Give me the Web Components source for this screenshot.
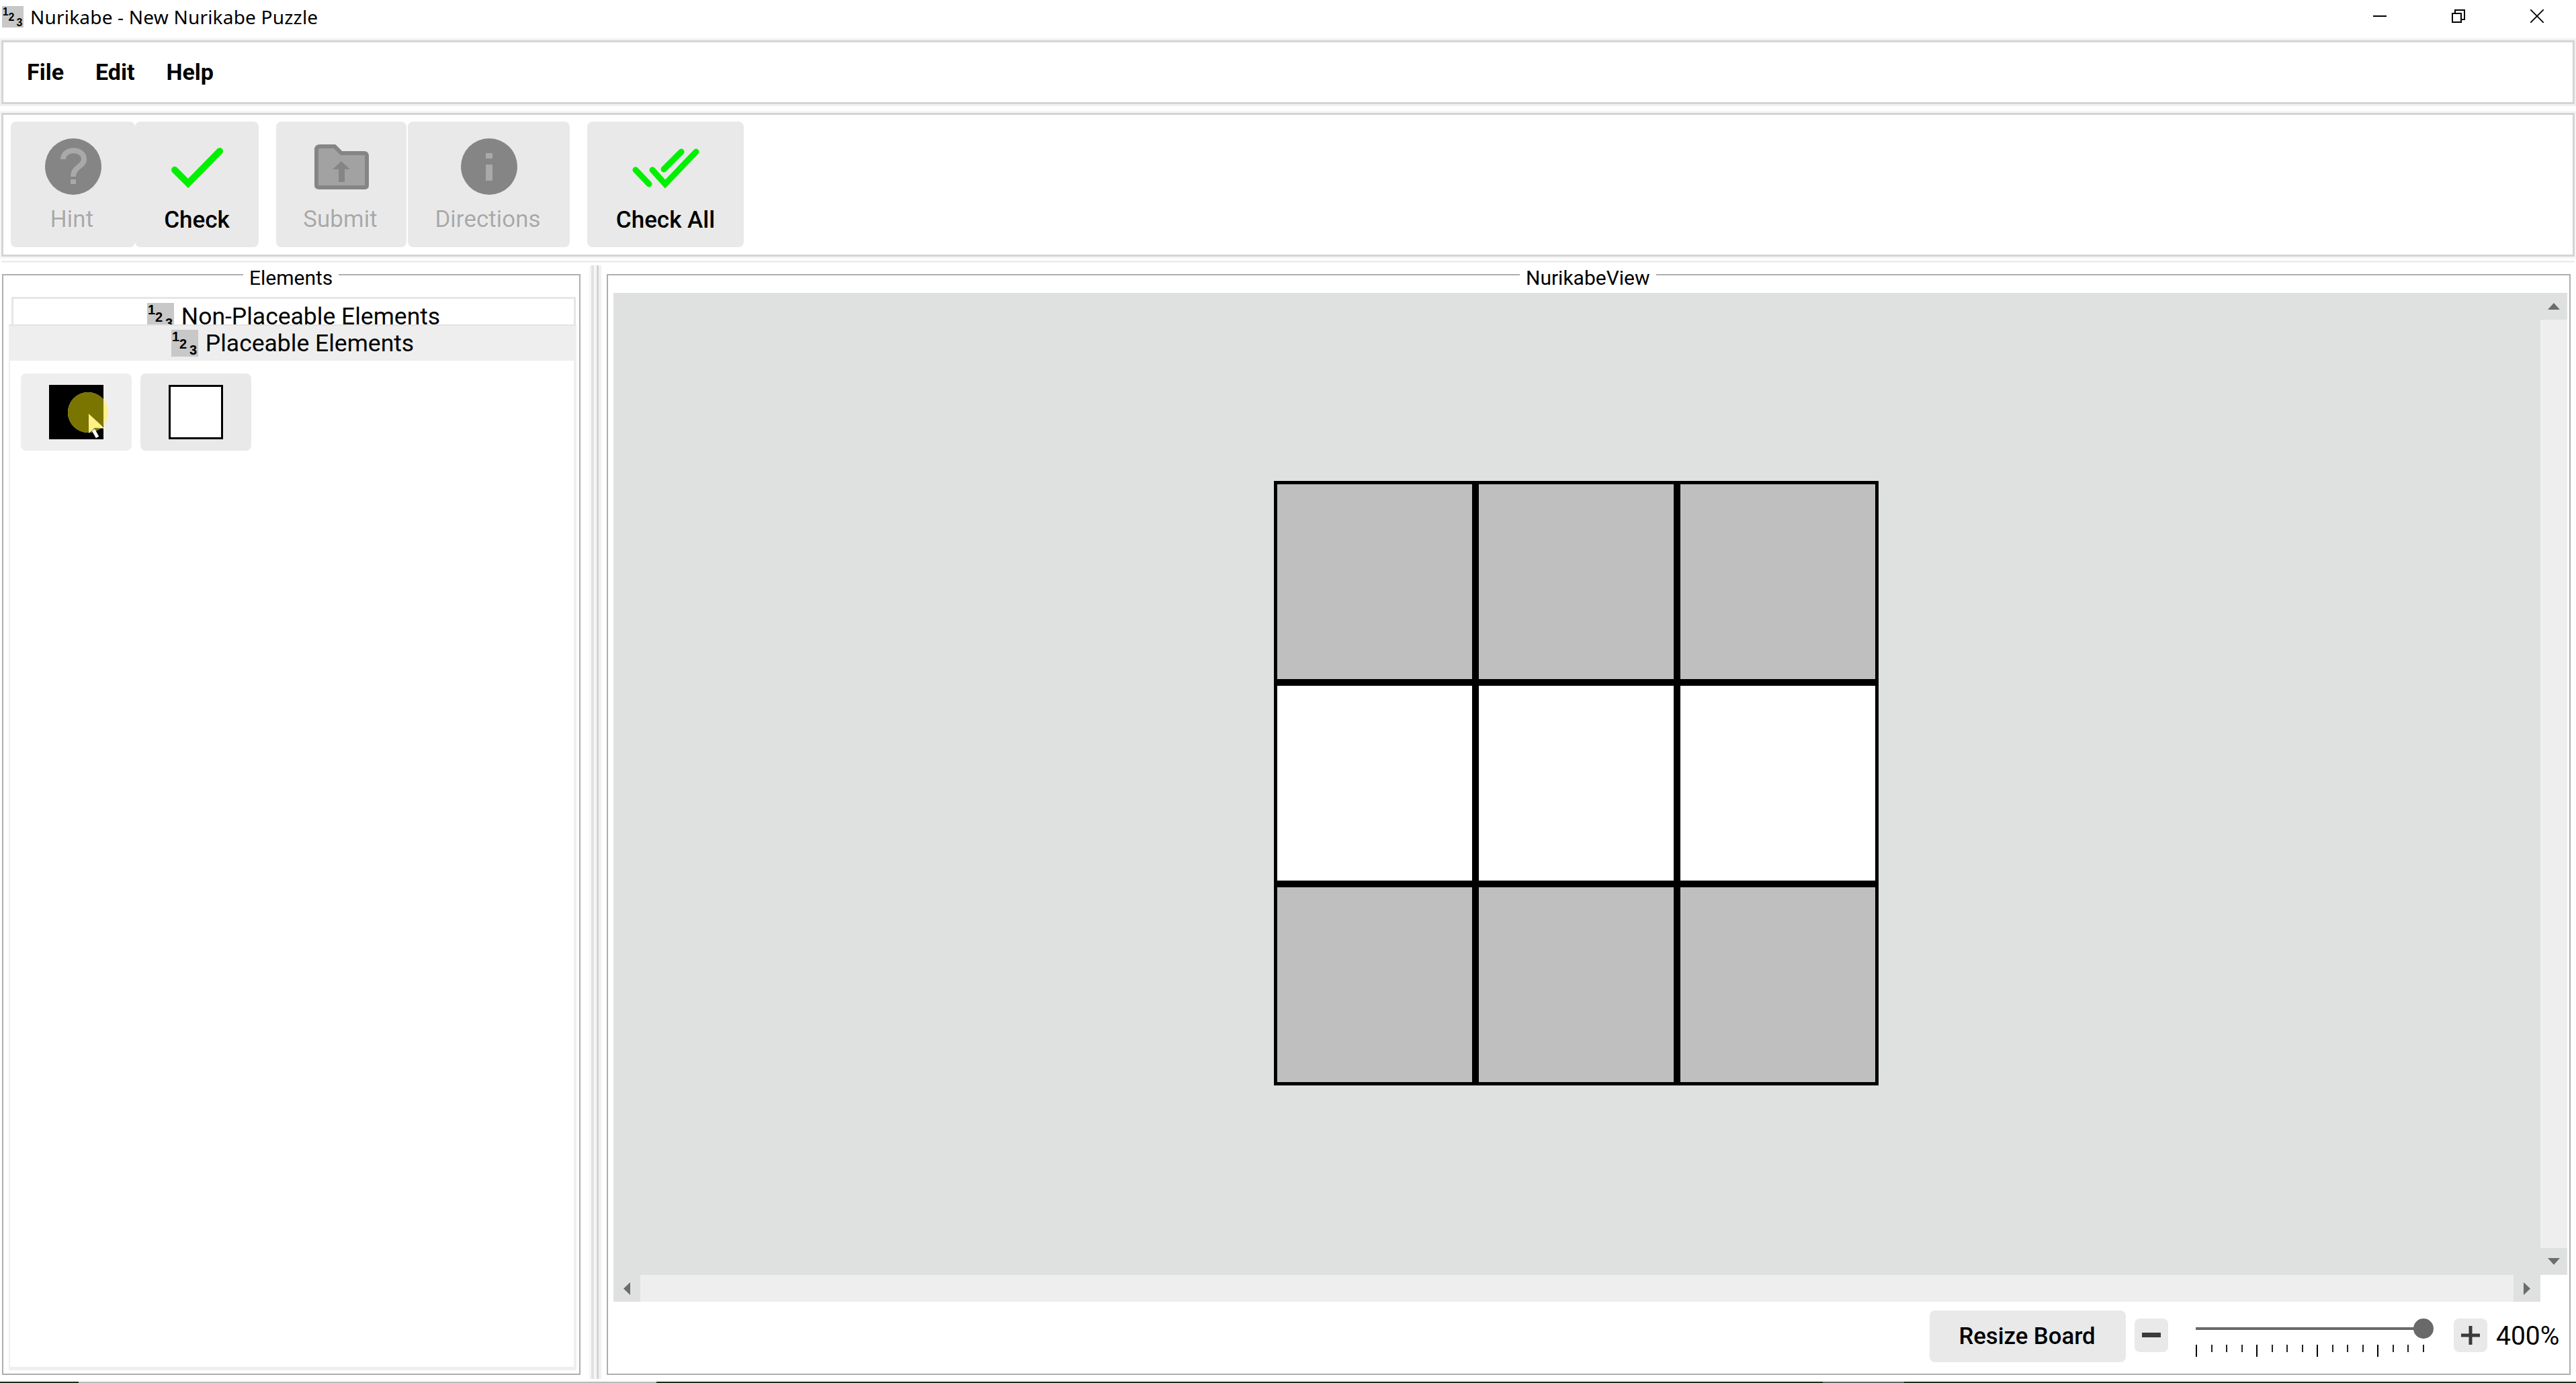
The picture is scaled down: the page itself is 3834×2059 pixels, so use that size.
<!DOCTYPE html>
<html>
<head>
<meta charset="utf-8">
<title>Nurikabe</title>
<style>
    html, body {
        margin: 0;
        background: #fff;
    }

    body {
        width: 3834px;
        height: 2059px;
        overflow: hidden;
        display: flex;
        flex-direction: column;
        font-family: Roboto, "Liberation Sans", sans-serif;
        color: #000;
    }
</style>
</head>
<body>
<nk-titlebar>Nurikabe - New Nurikabe Puzzle</nk-titlebar>

<nk-menubar>
    <nk-menu-item>File</nk-menu-item>
    <nk-menu-item>Edit</nk-menu-item>
    <nk-menu-item>Help</nk-menu-item>
</nk-menubar>

<nk-toolbar>
    <nk-tool-group>
        <nk-tool-button label="Hint" disabled style="width:185px">
            <svg width="84" height="84" viewBox="0 0 84 84">
                <circle cx="42" cy="42" r="42" fill="#858585"/>
                <path d="M27 31C27 14 58 14 58 31C58 42 42 42 42 57" fill="none" stroke="#a9a9a9" stroke-width="8"/>
                <rect x="38" y="61" width="8" height="7" fill="#a9a9a9"/>
            </svg>
        </nk-tool-button>
        <nk-tool-button label="Check" style="width:184px">
            <svg width="84" height="84" viewBox="0 0 84 84">
                <path d="M9 47L29 67L76 19" fill="none" stroke="#00f000" stroke-width="10" stroke-linecap="round"/>
            </svg>
        </nk-tool-button>
    </nk-tool-group>
    <nk-tool-group style="gap:2px">
        <nk-tool-button label="Submit" disabled style="width:194px">
            <svg width="84" height="84" viewBox="0 0 84 84">
                <path d="M5 17Q5 12 10 12H32L42 22H76Q80 22 80 27V70Q80 73 76 73H10Q5 73 5 70Z" fill="#a2a2a2" stroke="#858585" stroke-width="6"/>
                <path d="M42 34L55 46H47V65H38V46H29Z" fill="#858585"/>
            </svg>
        </nk-tool-button>
        <nk-tool-button label="Directions" disabled style="width:241px">
            <svg width="84" height="84" viewBox="0 0 84 84">
                <circle cx="42" cy="42" r="42" fill="#858585"/>
                <rect x="37" y="22" width="10" height="8" fill="#a9a9a9"/>
                <rect x="37" y="39" width="10" height="24" fill="#a9a9a9"/>
            </svg>
        </nk-tool-button>
    </nk-tool-group>
    <nk-tool-group>
        <nk-tool-button label="Check All" style="width:233px">
            <svg width="100" height="84" viewBox="0 0 100 84">
                <g fill="none" stroke="#00f000" stroke-width="9" stroke-linecap="round">
                    <path d="M5 47L25 68"/>
                    <path d="M30 47L49 68L95 20"/>
                    <path d="M47 46L73 20"/>
                </g>
            </svg>
        </nk-tool-button>
    </nk-tool-group>
</nk-toolbar>

<nk-main>
    <nk-group legend="Elements" slot="left" style="--pad:16px 4px 5px 8px;--legend-left:349px">
        <nk-accordion-head collapsed>Non-Placeable Elements</nk-accordion-head>
        <nk-accordion-head>Placeable Elements</nk-accordion-head>
        <nk-palette>
            <nk-tile kind="black" hover></nk-tile>
            <nk-tile kind="white"></nk-tile>
        </nk-palette>
    </nk-group>
    <nk-group legend="NurikabeView" slot="right" style="--pad:10px 3px 0 8px;--legend-left:1349px">
        <nk-canvas>
            <nk-board></nk-board>
        </nk-canvas>
        <nk-zoombar></nk-zoombar>
    </nk-group>
</nk-main>

<nk-taskstrip></nk-taskstrip>

<script>
const titlebarTemplate = document.createElement('template');
const menubarTemplate = document.createElement('template');
const menuItemTemplate = document.createElement('template');
const toolbarTemplate = document.createElement('template');
const toolGroupTemplate = document.createElement('template');
const toolButtonTemplate = document.createElement('template');
const mainTemplate = document.createElement('template');
const groupTemplate = document.createElement('template');
const accordionTemplate = document.createElement('template');
const paletteTemplate = document.createElement('template');
const tileTemplate = document.createElement('template');
const canvasTemplate = document.createElement('template');
const boardTemplate = document.createElement('template');
const zoombarTemplate = document.createElement('template');
const stripTemplate = document.createElement('template');

const iconMarkup = (size) => `
<svg width="${size}" height="${size}" viewBox="0 0 40 40" style="display:block;flex:none">
    <rect width="40" height="40" fill="#c8c8c8"/>
    <g font-family="Liberation Sans, sans-serif" font-weight="700" font-size="20" fill="#000">
        <text x="1" y="17">1</text>
        <text x="12" y="28">2</text>
        <text x="27" y="37">3</text>
    </g>
</svg>`;

titlebarTemplate.innerHTML = `
<style>
    :host {
        display: flex;
        flex: none;
        height: 57px;
        padding: 9px 48px 0 3px;
        box-sizing: border-box;
        font: 28px/32px "Noto Sans", sans-serif;
        color: #000;
    }
    .title {
        margin-left: 10px;
        letter-spacing: 0.2px;
        white-space: nowrap;
    }
    .controls {
        margin-left: auto;
        display: flex;
        gap: 97px;
        padding-top: 5px;
    }
    svg.ctl {
        display: block;
    }
</style>
${iconMarkup(32)}
<div class="title"><slot></slot></div>
<div class="controls">
    <svg class="ctl" width="20" height="20" viewBox="0 0 20 20"><path d="M0 10H20" stroke="#000" stroke-width="2"/></svg>
    <svg class="ctl" width="20" height="20" viewBox="0 0 20 20"><path d="M1 6H14V19H1ZM5 6V1H19V15H14" fill="none" stroke="#000" stroke-width="2"/></svg>
    <svg class="ctl" width="20" height="20" viewBox="0 0 20 20"><path d="M0 0L20 20M20 0L0 20" stroke="#000" stroke-width="1.800"/></svg>
</div>
`;

menubarTemplate.innerHTML = `
<style>
    :host {
        display: flex;
        flex: none;
        height: 95px;
        margin: 3px 2px 0 2px;
        box-sizing: border-box;
        padding: 0 0 2px 35px;
        gap: 47px;
        align-items: center;
        background: #fff;
        border: 3px solid #d4d4d4;
        box-shadow: 0 0 0 3px #f2f2f2;
    }
</style>
<slot></slot>
`;

menuItemTemplate.innerHTML = `
<style>
    :host {
        display: block;
        font: 700 34px/40px Roboto, sans-serif;
        color: #000;
    }
</style>
<slot></slot>
`;

toolbarTemplate.innerHTML = `
<style>
    :host {
        display: flex;
        flex: none;
        height: 214px;
        margin: 13px 2px 0 2px;
        box-sizing: border-box;
        padding: 10px 0 0 11px;
        gap: 26px;
        background: #fff;
        border: 3px solid #d4d4d4;
        box-shadow: 0 0 0 3px #f6f6f6, 0 6px 0 0 #fff, 0 9px 0 0 #eee;
    }
</style>
<slot></slot>
`;

toolGroupTemplate.innerHTML = `
<style>
    :host {
        display: flex;
        height: 187px;
    }
</style>
<slot></slot>
`;

toolButtonTemplate.innerHTML = `
<style>
    :host {
        display: flex;
        flex-direction: column;
        align-items: center;
        height: 187px;
        box-sizing: border-box;
        padding-top: 25px;
        background: #e9e9e9;
        border-radius: 8px;
        font: 500 35px/40px Roboto, sans-serif;
        color: #000;
    }
    :host([disabled]) {
        font-weight: 400;
        color: #a9a9a9;
        text-shadow: 1px 1px 0 rgba(255, 255, 255, 0.6);
    }
    .icon {
        height: 84px;
        display: flex;
        justify-content: center;
    }
    .label {
        margin-top: 18px;
        white-space: nowrap;
    }
    :host([disabled]) .label {
        margin-top: 17px;
        margin-right: 3px;
    }
</style>
<div class="icon"><slot></slot></div>
<div class="label"></div>
`;

mainTemplate.innerHTML = `
<style>
    :host {
        display: flex;
        flex: 1;
        min-height: 0;
        margin: 10px 0;
        padding: 0 8px 0 3px;
    }
    .left {
        display: flex;
        flex: none;
        width: 861px;
    }
    .right {
        display: flex;
        flex: 1;
        min-width: 0;
    }
    .splitter {
        flex: none;
        width: 18px;
        margin: 3px 8px -6px 13px;
        background: linear-gradient(90deg,
            #f6f6f6 0 3px, #e2e2e2 3px 7px, #f6f6f6 7px 11px,
            #d4d4d4 11px 14px, #f1f1f1 14px 18px);
    }
</style>
<div class="left"><slot name="left"></slot></div>
<div class="splitter"></div>
<div class="right"><slot name="right"></slot></div>
`;

groupTemplate.innerHTML = `
<style>
    :host {
        display: flex;
        flex: 1;
        min-width: 0;
    }
    fieldset {
        flex: 1;
        min-width: 0;
        margin: 0;
        padding: var(--pad);
        border: 2px solid #aeaeae;
        box-sizing: border-box;
        display: flex;
        flex-direction: column;
    }
    legend {
        margin: 0 auto 0 var(--legend-left);
        padding: 10px 9px 0;
        font: 30px/24px Roboto, sans-serif;
        color: #000;
    }
    .body {
        flex: 1;
        min-height: 0;
        display: flex;
        flex-direction: column;
    }
</style>
<fieldset>
    <legend></legend>
    <div class="body"><slot></slot></div>
</fieldset>
`;

accordionTemplate.innerHTML = `
<style>
    :host {
        display: flex;
        flex: none;
        justify-content: center;
        gap: 11px;
        height: 54px;
        box-sizing: border-box;
        padding-top: 6px;
        overflow: hidden;
        background: #eee;
        border-top: 2px solid #e4e4e4;
        font: 35.500px/40px Roboto, sans-serif;
        color: #000;
        white-space: nowrap;
    }
    :host([collapsed]) {
        height: 41px;
        margin: 0 1px 0 4px;
        background: #fff;
        border: solid #e6e6e6;
        border-width: 3px 3px 0;
    }
</style>
${iconMarkup(40)}
<div class="text"><slot></slot></div>
`;

paletteTemplate.innerHTML = `
<style>
    :host {
        display: flex;
        flex: 1;
        gap: 13px;
        align-items: flex-start;
        padding: 19px 0 0 16px;
        box-sizing: border-box;
        border: solid #efefef;
        border-width: 0 4px 5px 2px;
    }
</style>
<slot></slot>
`;

tileTemplate.innerHTML = `
<style>
    :host {
        display: flex;
        position: relative;
        align-items: center;
        justify-content: center;
        width: 165px;
        height: 115px;
        background: #e9e9e9;
        border-radius: 8px;
    }
    :host([hover]) {
        background: #eee;
    }
    .square {
        width: 81px;
        height: 81px;
        box-sizing: border-box;
    }
    :host([kind="black"]) .square {
        background: #000;
    }
    :host([kind="white"]) .square {
        background: #fff;
        border: 3px solid #000;
    }
    .cursor {
        position: absolute;
        left: 0;
        top: 0;
    }
</style>
<div class="square"></div>
`;

canvasTemplate.innerHTML = `
<style>
    :host {
        display: grid;
        flex: 1;
        min-height: 0;
        grid-template-columns: 1fr 40px;
        grid-template-rows: 1fr 40px;
    }
    .view {
        display: flex;
        align-items: center;
        justify-content: center;
        min-width: 0;
        min-height: 0;
        padding: 0 2px 2px 0;
        background: #dfe1e0;
    }
    .vbar {
        display: flex;
        flex-direction: column;
        background: #eee;
    }
    .hbar {
        display: flex;
        background: #eee;
    }
    .btn {
        flex: none;
        width: 40px;
        height: 40px;
        display: flex;
        align-items: center;
        justify-content: center;
        background: #dfe1e0;
    }
    .track {
        flex: 1;
    }
    .btn svg {
        display: block;
    }
</style>
<div class="view"><slot></slot></div>
<div class="vbar">
    <div class="btn"><svg width="18" height="10" viewBox="0 0 18 10"><path d="M9 0L18 10H0Z" fill="#6b6d6b"/></svg></div>
    <div class="track"></div>
    <div class="btn"><svg width="18" height="10" viewBox="0 0 18 10"><path d="M9 10L18 0H0Z" fill="#6b6d6b"/></svg></div>
</div>
<div class="hbar">
    <div class="btn"><svg width="10" height="19" viewBox="0 0 10 19"><path d="M0 9.500L10 0V19Z" fill="#6b6d6b"/></svg></div>
    <div class="track"></div>
    <div class="btn"><svg width="10" height="19" viewBox="0 0 10 19"><path d="M10 9.500L0 0V19Z" fill="#6b6d6b"/></svg></div>
</div>
`;

boardTemplate.innerHTML = `
<style>
    :host {
        display: grid;
        flex: none;
        grid-template-columns: repeat(3, 300px);
        grid-auto-rows: 300px;
    }
    div {
        box-sizing: border-box;
        border: 5px solid #000;
        background: #bfbfbf;
    }
    div.on {
        background: #fff;
    }
</style>
`;

zoombarTemplate.innerHTML = `
<style>
    :host {
        display: flex;
        flex: none;
        height: 107px;
        box-sizing: border-box;
        padding: 13px 0 0 0;
        justify-content: flex-end;
        align-items: flex-start;
        font: 500 34.700px/40px Roboto, sans-serif;
        color: #000;
    }
    button {
        margin: 0;
        padding: 0 2px 2px 0;
        border: 0;
        font: inherit;
        color: inherit;
        background: #e9e9e9;
        border-radius: 8px;
    }
    .resize {
        width: 292px;
        height: 77px;
        margin-right: 13px;
    }
    .step {
        width: 50px;
        height: 50px;
        margin-top: 12px;
        padding: 0;
        display: flex;
        align-items: center;
        justify-content: center;
    }
    .step svg {
        display: block;
    }
    .slider {
        position: relative;
        width: 340px;
        margin: 25px 44px 0 41px;
    }
    .rail {
        width: 333px;
        height: 4px;
        background: #696969;
    }
    .thumb {
        position: absolute;
        right: -14px;
        top: -13px;
        width: 30px;
        height: 30px;
        border-radius: 50%;
        background: #696969;
    }
    .ticks {
        display: flex;
        justify-content: space-between;
        align-items: flex-start;
        margin-top: 22px;
    }
    .ticks i {
        width: 2px;
        height: 11px;
        background: #222;
    }
    .ticks i.major {
        height: 18px;
        background: #000;
    }
    .percent {
        width: 119px;
        box-sizing: border-box;
        padding-left: 13px;
        font: 39px/77px Roboto, sans-serif;
    }
</style>
<button class="resize">Resize Board</button>
<button class="step">
    <svg width="28" height="8" viewBox="0 0 28 8"><rect width="28" height="7" fill="#3b3b3b"/></svg>
</button>
<div class="slider">
    <div class="rail"></div>
    <div class="thumb"></div>
    <div class="ticks"></div>
</div>
<button class="step">
    <svg width="28" height="28" viewBox="0 0 28 28"><path d="M0 14H28M14 0V28" stroke="#3b3b3b" stroke-width="5"/></svg>
</button>
<div class="percent">400%</div>
`;

stripTemplate.innerHTML = `
<style>
    :host {
        display: flex;
        flex: none;
        height: 2px;
        background: #1f2a1a;
    }
    .a {
        margin-left: 117px;
        width: 860px;
        background: #bbb;
    }
    .b {
        margin-left: 1736px;
        width: 121px;
        background: #666;
    }
</style>
<div class="a"></div>
<div class="b"></div>
`;

class Titlebar extends HTMLElement {
    constructor() {
        super();

        this.attachShadow({ mode: 'open' });
        this.shadowRoot.appendChild(titlebarTemplate.content.cloneNode(true));
    }
}

class Menubar extends HTMLElement {
    constructor() {
        super();

        this.attachShadow({ mode: 'open' });
        this.shadowRoot.appendChild(menubarTemplate.content.cloneNode(true));
    }
}

class MenuItem extends HTMLElement {
    constructor() {
        super();

        this.attachShadow({ mode: 'open' });
        this.shadowRoot.appendChild(menuItemTemplate.content.cloneNode(true));
    }
}

class Toolbar extends HTMLElement {
    constructor() {
        super();

        this.attachShadow({ mode: 'open' });
        this.shadowRoot.appendChild(toolbarTemplate.content.cloneNode(true));
    }
}

class ToolGroup extends HTMLElement {
    constructor() {
        super();

        this.attachShadow({ mode: 'open' });
        this.shadowRoot.appendChild(toolGroupTemplate.content.cloneNode(true));
    }
}

class ToolButton extends HTMLElement {
    constructor() {
        super();

        this.attachShadow({ mode: 'open' });
        this.shadowRoot.appendChild(toolButtonTemplate.content.cloneNode(true));
    }

    connectedCallback() {
        this.shadowRoot.querySelector('.label').textContent = this.getAttribute('label');
    }
}

class Main extends HTMLElement {
    constructor() {
        super();

        this.attachShadow({ mode: 'open' });
        this.shadowRoot.appendChild(mainTemplate.content.cloneNode(true));
    }
}

class Group extends HTMLElement {
    constructor() {
        super();

        this.attachShadow({ mode: 'open' });
        this.shadowRoot.appendChild(groupTemplate.content.cloneNode(true));
    }

    connectedCallback() {
        this.shadowRoot.querySelector('legend').textContent = this.getAttribute('legend');
    }
}

class AccordionHead extends HTMLElement {
    constructor() {
        super();

        this.attachShadow({ mode: 'open' });
        this.shadowRoot.appendChild(accordionTemplate.content.cloneNode(true));
    }
}

class Palette extends HTMLElement {
    constructor() {
        super();

        this.attachShadow({ mode: 'open' });
        this.shadowRoot.appendChild(paletteTemplate.content.cloneNode(true));
    }
}

class Tile extends HTMLElement {
    constructor() {
        super();

        this.attachShadow({ mode: 'open' });
        this.shadowRoot.appendChild(tileTemplate.content.cloneNode(true));
    }

    connectedCallback() {
        // the recording's mouse highlight sits on the hovered tile
        if (this.hasAttribute('hover')) {
            const layer = document.createElement('div');
            layer.className = 'cursor';
            layer.innerHTML = `
            <svg width="165" height="115" viewBox="0 0 165 115" style="display:block">
                <defs><clipPath id="sq"><rect x="42" y="17" width="81" height="81"/></clipPath></defs>
                <circle cx="100" cy="58" r="30" fill="#fff08a"/>
                <circle cx="100" cy="58" r="30" fill="#7a7400" clip-path="url(#sq)"/>
                <path d="M108 84L114 95" stroke="#fff" stroke-width="5"/>
                <path d="M101 60V89L110 81L125 82Z" fill="#fff08a"/>
            </svg>`;
            this.shadowRoot.appendChild(layer);
        }
    }
}

class Canvas extends HTMLElement {
    constructor() {
        super();

        this.attachShadow({ mode: 'open' });
        this.shadowRoot.appendChild(canvasTemplate.content.cloneNode(true));
    }
}

class Board extends HTMLElement {
    constructor() {
        super();

        this.attachShadow({ mode: 'open' });
        this.shadowRoot.appendChild(boardTemplate.content.cloneNode(true));

        for (let i = 0; i < 9; i++) {
            const cell = document.createElement('div');

            if (i >= 3 && i < 6) {
                cell.className = 'on';
            }
            this.shadowRoot.appendChild(cell);
        }
    }
}

class Zoombar extends HTMLElement {
    constructor() {
        super();

        this.attachShadow({ mode: 'open' });
        this.shadowRoot.appendChild(zoombarTemplate.content.cloneNode(true));

        const ticks = this.shadowRoot.querySelector('.ticks');
        for (let i = 0; i < 16; i++) {
            const tick = document.createElement('i');

            if (i % 4 === 0) {
                tick.className = 'major';
            }
            ticks.appendChild(tick);
        }
    }
}

class TaskStrip extends HTMLElement {
    constructor() {
        super();

        this.attachShadow({ mode: 'open' });
        this.shadowRoot.appendChild(stripTemplate.content.cloneNode(true));
    }
}

window.customElements.define('nk-titlebar', Titlebar);
window.customElements.define('nk-menubar', Menubar);
window.customElements.define('nk-menu-item', MenuItem);
window.customElements.define('nk-toolbar', Toolbar);
window.customElements.define('nk-tool-group', ToolGroup);
window.customElements.define('nk-tool-button', ToolButton);
window.customElements.define('nk-main', Main);
window.customElements.define('nk-group', Group);
window.customElements.define('nk-accordion-head', AccordionHead);
window.customElements.define('nk-palette', Palette);
window.customElements.define('nk-tile', Tile);
window.customElements.define('nk-canvas', Canvas);
window.customElements.define('nk-board', Board);
window.customElements.define('nk-zoombar', Zoombar);
window.customElements.define('nk-taskstrip', TaskStrip);
</script>
</body>
</html>
